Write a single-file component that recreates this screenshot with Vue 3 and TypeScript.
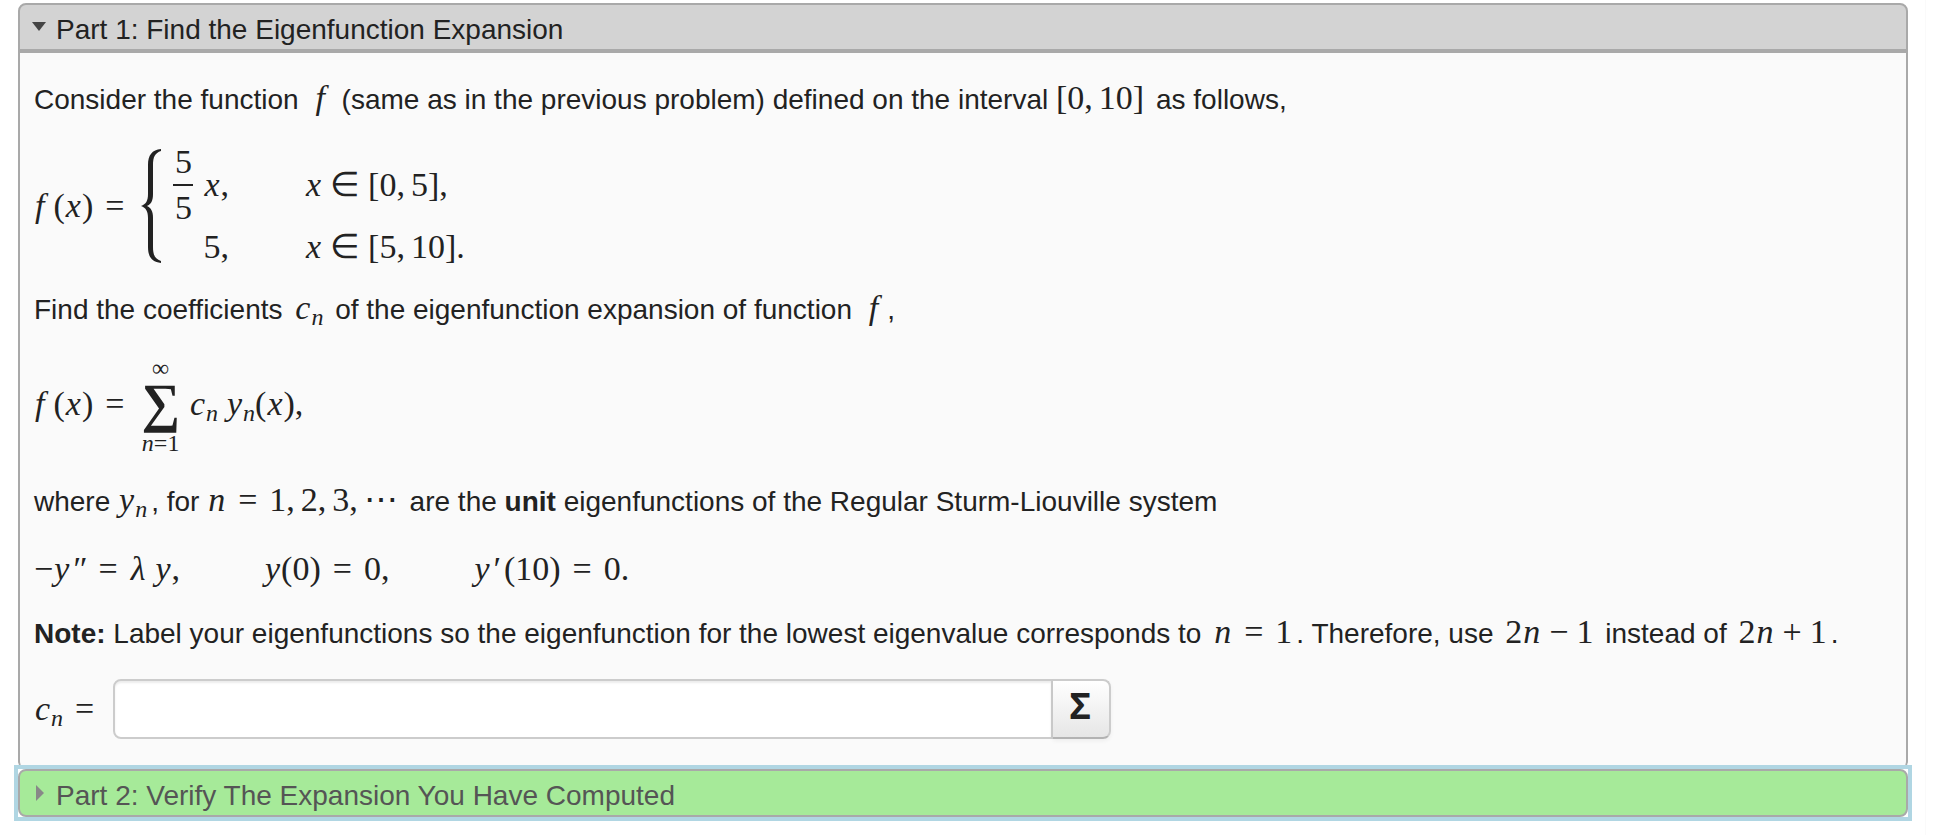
<script setup lang="ts">
import { ref } from 'vue'

const partOneOpen = ref(true)
const answer = ref('')
</script>

<template>
  <main class="page">
    <section class="part">
      <button class="head" type="button" :aria-expanded="partOneOpen" @click="partOneOpen = !partOneOpen">
        <svg class="arrow" viewBox="0 0 16 16" aria-hidden="true"><path d="M0 3H14L7 12Z" /></svg>
        <span class="title">Part 1: Find the Eigenfunction Expansion</span>
      </button>
      <div v-show="partOneOpen" class="body">
        <p>
          Consider the function <span class="m fn"><i>f</i></span> (same as in the previous problem) defined on the interval
          <span class="m end">[0,<span class="thin"></span>10]</span> as follows,
        </p>

        <div class="display cases">
          <span class="m"><i>f</i><span class="mid"></span>(<i>x</i>)<span class="rel">=</span></span>
          <svg class="brace" viewBox="0 0 20 116" aria-hidden="true">
            <path d="M20 1C11 2 7 7 7 17V46C7 53 5 56 0 58C5 60 7 63 7 70V99C7 109 11 114 20 115V113C14 111 12 107 12 99V70C12 63 10 60 6 58C10 56 12 53 12 46V17C12 9 14 5 20 3Z" />
          </svg>
          <div class="rows">
            <span class="m coef"><span class="frac"><span>5</span><span class="den">5</span></span><i>x</i>,</span>
            <span class="m"><i>x</i><span class="bin">∈</span>[0,<span class="thin"></span>5],</span>
            <span class="m coef">5,</span>
            <span class="m"><i>x</i><span class="bin">∈</span>[5,<span class="thin"></span>10].</span>
          </div>
        </div>

        <p>
          Find the coefficients <span class="m sym"><i>c</i><i class="sub">n</i></span> of the eigenfunction expansion of function
          <span class="m fn"><i>f</i></span>,
        </p>

        <div class="display series">
          <span class="m"><i>f</i><span class="mid"></span>(<i>x</i>)<span class="rel">=</span></span>
          <span class="sum"><span class="lim">∞</span><span class="op">∑</span><span class="lim low"><i>n</i>=1</span></span>
          <span class="m"><i>c</i><i class="sub">n</i><span class="mid"></span><i>y</i><i class="sub">n</i>(<i>x</i>),</span>
        </div>

        <p>
          where <span class="m end"><i>y</i><i class="sub">n</i></span>, for
          <span class="m end"><i>n</i><span class="rel">=</span>1,<span class="thin"></span>2,<span class="thin"></span>3,<span class="thin"></span>⋯</span>
          are the <b>unit</b> eigenfunctions of the Regular Sturm-Liouville system
        </p>

        <p class="equations">
          <span class="m">−<i>y</i><i>″</i><span class="rel">=</span><i>λ</i><span class="mid"></span><i>y</i>,</span>
          <span class="m"><i>y</i>(0)<span class="rel">=</span>0,</span>
          <span class="m"><i>y</i><i>′</i><span class="hair"></span>(10)<span class="rel">=</span>0.</span>
        </p>

        <p>
          <b>Note:</b> Label your eigenfunctions so the eigenfunction for the lowest eigenvalue corresponds to
          <span class="m sym"><i>n</i><span class="rel">=</span>1</span>. Therefore, use
          <span class="m sym">2<i>n</i><span class="bin">−</span>1</span> instead of
          <span class="m sym">2<i>n</i><span class="bin">+</span>1</span>.
        </p>

        <div class="answer">
          <label class="m" for="cn"><i>c</i><i class="sub">n</i><span class="rel">=</span></label>
          <input id="cn" v-model="answer" type="text" autocomplete="off" />
          <button class="editor" type="button" aria-label="Equation editor">Σ</button>
        </div>
      </div>
    </section>

    <section class="part focused">
      <button class="head next" type="button" aria-expanded="false">
        <svg class="arrow" viewBox="0 0 16 16" aria-hidden="true"><path d="M4 0V16L12 8Z" /></svg>
        <span class="title">Part 2: Verify The Expansion You Have Computed</span>
      </button>
    </section>
  </main>
</template>

<style>
body {
  margin: 0;
  background: #fff;
}
</style>

<style scoped>
.page {
  box-sizing: border-box;
  margin-right: 22px;
  padding: 3px 17px 18px 18px;
  border-right: 1px solid #fafafa;
  font-family: "Liberation Sans", Arial, sans-serif;
  font-size: 28px;
  line-height: 40px;
  color: #222;
}

.head {
  box-sizing: border-box;
  display: flex;
  align-items: center;
  gap: 8px;
  width: 100%;
  height: 48px;
  padding: 0 12px;
  border: 2px solid #a9a9a9;
  border-radius: 8px 8px 0 0;
  background: #d3d3d3;
  color: #222;
  font: inherit;
  text-align: left;
}

.title {
  padding-top: 5px;
}

.arrow {
  flex: none;
  width: 16px;
  height: 16px;
  fill: #444;
}

.focused {
  outline: 4px solid #b0d6e3;
}

.next {
  border-radius: 8px;
  background: #a6ea99;
  color: #555;
}

.next .arrow {
  fill: #888;
}

.body {
  padding: 27px 14px 30px;
  border: 2px solid #a9a9a9;
  border-bottom: 0;
  border-radius: 0 0 8px 8px;
  background: #fafafa;
}

p {
  margin: 0;
}

.m {
  font-family: "Liberation Serif", "Times New Roman", serif;
  font-size: 34px;
  line-height: 0;
  white-space: nowrap;
}

.m i {
  padding: 0 1px;
}

.fn {
  margin: 0 8px;
}

.end {
  margin-right: 4px;
}

.sym {
  margin: 0 4px;
}

.m .sub {
  padding: 0;
  font-size: 24px;
  line-height: 0;
  vertical-align: -6px;
}

.rel {
  margin: 0 12px;
}

.bin {
  margin: 0 8px;
}

.hair {
  margin-left: 4px;
}

.thin {
  margin-left: 6px;
}

.mid {
  margin-left: 8px;
}

.display {
  display: flex;
  align-items: center;
}

.display > .m,
.rows > .m {
  line-height: 40px;
}

.display > .m:first-child {
  margin-right: 5px;
}

.cases {
  margin: 25px 0 23px;
}

.brace {
  width: 20px;
  height: 116px;
  fill: #222;
}

.rows {
  display: grid;
  grid-template: 80px 40px / auto auto;
  gap: 2px 76px;
  align-items: center;
  margin-left: 12px;
}

.coef {
  display: flex;
  align-items: center;
  justify-content: flex-end;
}

.frac {
  display: grid;
  width: 20px;
  margin-right: 10px;
  line-height: 44px;
  text-align: center;
}

.den {
  border-top: 2px solid #222;
}

.series {
  margin: 28px 0 24px;
}

.series > .m {
  padding-bottom: 8px;
}

.sum {
  display: grid;
  justify-items: center;
  margin-right: 9px;
  font-family: "Liberation Serif", "Times New Roman", serif;
}

.lim {
  font-size: 24px;
  line-height: 20px;
}

.low {
  line-height: 30px;
}

.op {
  font-size: 54px;
  font-weight: bold;
  line-height: 50px;
}

.equations {
  display: flex;
  gap: 84px;
  margin: 27px 0 25px;
}

.equations .m {
  line-height: 40px;
}

.answer {
  display: flex;
  align-items: center;
  margin-top: 25px;
}

.answer .m {
  margin-right: 7px;
  line-height: 40px;
}

input {
  box-sizing: border-box;
  flex: 0 1 940px;
  min-width: 0;
  height: 60px;
  padding: 0 12px;
  border: 2px solid #ccc;
  border-radius: 8px 0 0 8px;
  background: #fff;
  box-shadow: inset 0 2px 2px rgba(0, 0, 0, 0.075);
  color: #222;
  font: inherit;
}

.editor {
  box-sizing: border-box;
  width: 58px;
  height: 60px;
  padding: 0 2px 6px 0;
  border: 2px solid #ccc;
  border-bottom-color: #b3b3b3;
  border-left: 0;
  border-radius: 0 8px 8px 0;
  background: linear-gradient(#fff, #e6e6e6);
  box-shadow: 0 2px 4px rgba(0, 0, 0, 0.05);
  color: #222;
  font: bold 36px / 40px "Noto Sans", sans-serif;
}
</style>
